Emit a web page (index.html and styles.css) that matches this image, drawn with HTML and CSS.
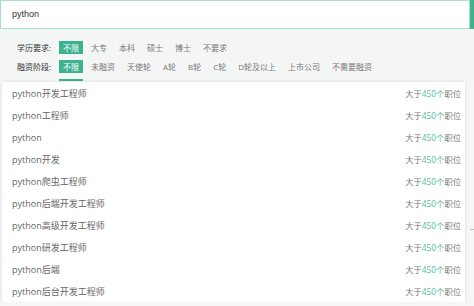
FILE: index.html
```html
<!DOCTYPE html>
<html lang="zh-CN">
<head>
    <meta charset="UTF-8">
    <title>职位搜索</title>
    <link rel="stylesheet" href="styles.css">
</head>
<body>
    <div class="search">
        <div class="search-input">python</div>
        <div class="search-btn"></div>
    </div>

    <div class="filters">
        <div class="filter-row">
            <span class="filter-label">学历要求:</span>
            <span class="tag active">不限</span>
            <span class="tag">大专</span>
            <span class="tag">本科</span>
            <span class="tag">硕士</span>
            <span class="tag">博士</span>
            <span class="tag">不要求</span>
        </div>
        <div class="filter-row">
            <span class="filter-label">融资阶段:</span>
            <span class="tag active">不限</span>
            <span class="tag">未融资</span>
            <span class="tag">天使轮</span>
            <span class="tag">A轮</span>
            <span class="tag">B轮</span>
            <span class="tag">C轮</span>
            <span class="tag">D轮及以上</span>
            <span class="tag">上市公司</span>
            <span class="tag">不需要融资</span>
        </div>
        <div class="indicator"></div>
    </div>

    <div class="results">
        <ul class="suggest-list">
            <li><span class="name">python开发工程师</span><span class="count">大于<em>450个</em>职位</span></li>
            <li><span class="name">python工程师</span><span class="count">大于<em>450个</em>职位</span></li>
            <li><span class="name">python</span><span class="count">大于<em>450个</em>职位</span></li>
            <li><span class="name">python开发</span><span class="count">大于<em>450个</em>职位</span></li>
            <li><span class="name">python爬虫工程师</span><span class="count">大于<em>450个</em>职位</span></li>
            <li><span class="name">python后端开发工程师</span><span class="count">大于<em>450个</em>职位</span></li>
            <li><span class="name">python高级开发工程师</span><span class="count">大于<em>450个</em>职位</span></li>
            <li><span class="name">python研发工程师</span><span class="count">大于<em>450个</em>职位</span></li>
            <li><span class="name">python后端</span><span class="count">大于<em>450个</em>职位</span></li>
            <li><span class="name">python后台开发工程师</span><span class="count">大于<em>450个</em>职位</span></li>
        </ul>
        <span class="side-mark"></span>
    </div>
</body>
</html>
```

FILE: styles.css
```css
body {
    margin: 0;
    background: #f5f6f6;
    font-family: 'Open Sans', 'Noto Sans CJK SC', sans-serif;
    color: #555;
    overflow: hidden;
}

.search {
    display: flex;
    height: 29px;
}

.search-input {
    flex: 1;
    box-sizing: border-box;
    border: 1px solid #a9ddcc;
    background: #fff;
    padding-left: 11px;
    line-height: 27px;
    font-family: 'Liberation Sans', 'Noto Sans CJK SC', sans-serif;
    font-size: 9px;
    color: #333;
}

.search-btn {
    width: 4px;
    background: #3bb38e;
}

.filters {
    padding-top: 9px;
    background: #f4f6f6;
}

.filter-row {
    display: flex;
    align-items: center;
    height: 19px;
    font-size: 8px;
}

.filter-label {
    margin-left: 17px;
    width: 42px;
    color: #333;
}

.tag {
    padding: 0 4px;
    margin-right: 4px;
    line-height: 13px;
    color: #777;
}

.tag.active {
    background: #3db28f;
    color: #fff;
}

.indicator {
    margin: 3px 0 1px 59px;
    width: 24px;
    height: 2px;
    background: #3db28f;
}

.results {
    position: relative;
}

.suggest-list {
    list-style: none;
    margin: 0 9px 0 2px;
    padding: 0;
    background: #fff;
    box-shadow: 0 0 3px rgba(0,0,0,0.12);
}

.suggest-list li {
    display: flex;
    align-items: center;
    justify-content: space-between;
    height: 22px;
    padding: 0 4px 0 10px;
}

.name {
    font-size: 9px;
    color: #666;
}

.count {
    font-size: 8.3px;
    color: #777;
}

.count em {
    font-style: normal;
    color: #52bd9b;
}

/* bit of the page behind the dropdown */
.side-mark {
    position: absolute;
    right: 0;
    top: 147px;
    width: 4px;
    height: 1px;
    background: #bbb;
}
```
